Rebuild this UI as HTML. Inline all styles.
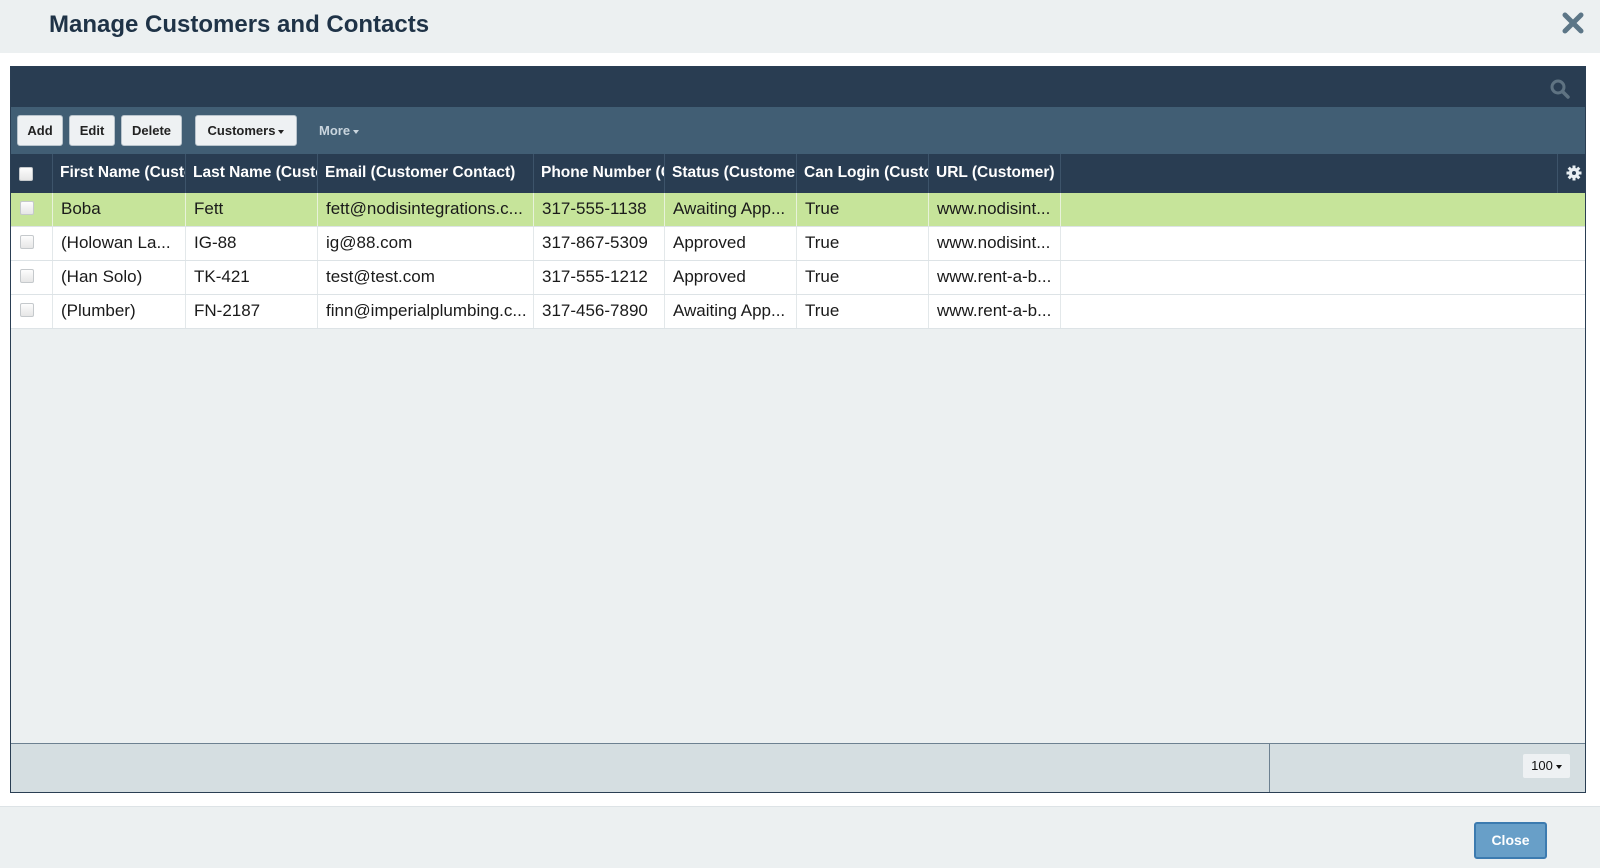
<!DOCTYPE html>
<html><head><meta charset="utf-8"><style>
*{box-sizing:border-box;margin:0;padding:0}
body{width:1600px;height:868px;background:#fff;font-family:"Liberation Sans",Arial,sans-serif;position:relative;overflow:hidden}
.top{position:absolute;left:0;top:0;width:1600px;height:53px;background:#ecf0f1}
.top h1{position:absolute;left:49px;top:11px;font-size:24px;font-weight:bold;color:#1f3347}
.x{position:absolute;left:1562px;top:12px}
.grid{position:absolute;left:10px;top:66px;width:1576px;height:727px;border:1px solid #2a3e53;background:#ecf0f1;overflow:hidden}
.bar1{position:absolute;left:0;top:0;width:100%;height:40px;background:#293d52}
.bar2{position:absolute;left:0;top:40px;width:100%;height:47px;background:#415e74}
.btn{position:absolute;top:8px;height:31px;background:#eef1f3;border:1px solid #b9c4cc;border-radius:3px;font-size:13px;font-weight:bold;color:#222;line-height:29px;text-align:center}
.car{display:inline-block;width:0;height:0;border-left:3px solid transparent;border-right:3px solid transparent;border-top:4px solid currentColor;vertical-align:middle;margin-left:3px}
.hdr{position:absolute;left:0;top:87px;width:100%;height:39px;background:#293d52}
.c{position:absolute;top:0;height:100%;border-right:1px solid #3d546a;color:#fff;font-size:15.5px;font-weight:bold;line-height:38px;padding-left:7px;white-space:nowrap;overflow:hidden}
.row{position:absolute;left:0;width:100%;height:34px;background:#fff;border-bottom:1px solid #dde3e6}
.row.g{background:#c6e49a}
.d{position:absolute;top:0;height:100%;border-right:1px solid #e3e8ea;font-size:17px;color:#1a1a1a;line-height:32px;padding-left:8px;white-space:nowrap;overflow:hidden}
.g .d{border-right-color:#e8f2da}
.cb{position:absolute;left:9px;width:14px;height:14px;border:1px solid #c5c9cc;border-radius:2px;background:linear-gradient(#fdfdfd,#e6e6e6)}
.foot{position:absolute;left:0;top:676px;width:100%;height:49px;background:#d5dee1;border-top:1px solid #6d8191}
.bot{position:absolute;left:0;top:806px;width:1600px;height:62px;background:#ecf0f1;border-top:1px solid #dde3e6}
.close{position:absolute;left:1474px;top:822px;width:73px;height:37px;background:#689fc8;border:2px solid #3c7bb0;border-radius:3px;color:#fff;font-weight:bold;font-size:14px;text-align:center;line-height:33px}
</style></head><body>
<div class="top"><h1>Manage Customers and Contacts</h1>
<svg class="x" width="22" height="22" viewBox="0 0 22 22"><path d="M3 3L19 19M19 3L3 19" stroke="#5c7687" stroke-width="5" stroke-linecap="round"/></svg></div>
<div class="grid">
<div class="bar1"><svg style="position:absolute;left:1538px;top:11px" width="22" height="22" viewBox="0 0 22 22"><circle cx="9" cy="9" r="6" fill="none" stroke="#5f7382" stroke-width="3"/><path d="M13.5 13.5L19 19" stroke="#5f7382" stroke-width="3.5" stroke-linecap="round"/></svg></div>
<div class="bar2">
<div class="btn" style="left:6px;width:46px">Add</div>
<div class="btn" style="left:58px;width:46px">Edit</div>
<div class="btn" style="left:110px;width:61px">Delete</div>
<div class="btn" style="left:184px;width:102px">Customers<span class="car"></span></div>
<div style="position:absolute;left:308px;top:8px;line-height:31px;font-size:13px;font-weight:bold;color:#c9d5de">More<span class="car"></span></div>
</div>
<div class="hdr">
<div class="c" style="left:0;width:42px"><div class="cb" style="top:13px;left:8px"></div></div>
<div class="c" style="left:42px;width:133px">First Name (Customer Contact)</div>
<div class="c" style="left:175px;width:132px">Last Name (Customer Contact)</div>
<div class="c" style="left:307px;width:216px">Email (Customer Contact)</div>
<div class="c" style="left:523px;width:131px">Phone Number (Customer)</div>
<div class="c" style="left:654px;width:132px">Status (Customer)</div>
<div class="c" style="left:786px;width:132px">Can Login (Customer)</div>
<div class="c" style="left:918px;width:132px">URL (Customer)</div>
<div class="c" style="left:1546px;width:30px;border-right:none;border-left:1px solid #3d546a;padding:0"><svg style="position:absolute;left:8px;top:11px" width="16" height="16" viewBox="0 0 16 16"><g fill="#e8eef2"><circle cx="8" cy="8" r="5.2"/><rect x="6.5" y="0.5" width="3" height="15"/><rect x="0.5" y="6.5" width="15" height="3"/><rect x="6.5" y="0.5" width="3" height="15" transform="rotate(45 8 8)"/><rect x="6.5" y="0.5" width="3" height="15" transform="rotate(-45 8 8)"/></g><circle cx="8" cy="8" r="2" fill="#293d52"/></svg></div>
</div>
<div class="row g" style="top:126px"><div class="d" style="left:0;width:42px"><div class="cb" style="top:8px"></div></div><div class="d" style="left:42px;width:133px">Boba</div><div class="d" style="left:175px;width:132px">Fett</div><div class="d" style="left:307px;width:216px">fett@nodisintegrations.c...</div><div class="d" style="left:523px;width:131px">317-555-1138</div><div class="d" style="left:654px;width:132px">Awaiting App...</div><div class="d" style="left:786px;width:132px">True</div><div class="d" style="left:918px;width:132px">www.nodisint...</div></div>
<div class="row" style="top:160px"><div class="d" style="left:0;width:42px"><div class="cb" style="top:8px"></div></div><div class="d" style="left:42px;width:133px">(Holowan La...</div><div class="d" style="left:175px;width:132px">IG-88</div><div class="d" style="left:307px;width:216px">ig@88.com</div><div class="d" style="left:523px;width:131px">317-867-5309</div><div class="d" style="left:654px;width:132px">Approved</div><div class="d" style="left:786px;width:132px">True</div><div class="d" style="left:918px;width:132px">www.nodisint...</div></div>
<div class="row" style="top:194px"><div class="d" style="left:0;width:42px"><div class="cb" style="top:8px"></div></div><div class="d" style="left:42px;width:133px">(Han Solo)</div><div class="d" style="left:175px;width:132px">TK-421</div><div class="d" style="left:307px;width:216px">test@test.com</div><div class="d" style="left:523px;width:131px">317-555-1212</div><div class="d" style="left:654px;width:132px">Approved</div><div class="d" style="left:786px;width:132px">True</div><div class="d" style="left:918px;width:132px">www.rent-a-b...</div></div>
<div class="row" style="top:228px"><div class="d" style="left:0;width:42px"><div class="cb" style="top:8px"></div></div><div class="d" style="left:42px;width:133px">(Plumber)</div><div class="d" style="left:175px;width:132px">FN-2187</div><div class="d" style="left:307px;width:216px">finn@imperialplumbing.c...</div><div class="d" style="left:523px;width:131px">317-456-7890</div><div class="d" style="left:654px;width:132px">Awaiting App...</div><div class="d" style="left:786px;width:132px">True</div><div class="d" style="left:918px;width:132px">www.rent-a-b...</div></div>
<div class="foot"><div style="position:absolute;left:1258px;top:0;height:100%;border-left:1px solid #6d8191"></div>
<div style="position:absolute;left:1512px;top:10px;width:47px;height:24px;background:#eef1f3;border-radius:2px;font-size:13px;line-height:24px;text-align:center;color:#111">100<span class="car"></span></div></div>
</div>
<div class="bot"></div>
<div class="close">Close</div>
</body></html>
